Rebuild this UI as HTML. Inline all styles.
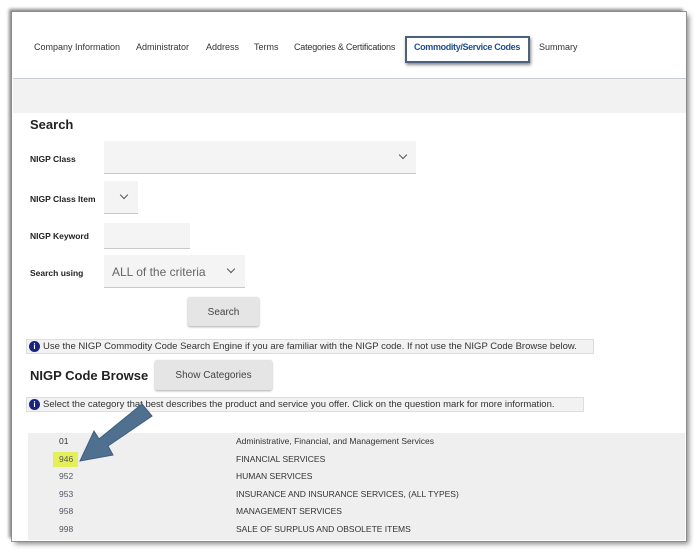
<!DOCTYPE html>
<html><head><style>
*{margin:0;padding:0;box-sizing:border-box}
body{width:700px;height:553px;background:#fff;position:relative;overflow:hidden;font-family:"Liberation Sans",sans-serif;color:#333}
.frame{position:absolute;left:12px;top:12px;width:674px;height:529px;background:#fff;box-shadow:-3px -3px 3px #8a8a8a,3px 3px 5px #8a8a8a, 0 0 0 1px #999}
.a{position:absolute;white-space:nowrap}
.nav{font-size:9px;color:#333;top:42px}
.lbl{font-size:8.5px;font-weight:bold;color:#222;left:30px}
.inp{position:absolute;background:#f4f4f4;border-bottom:1px solid #c8c8c8}
.chev{position:absolute;width:6px;height:6px;border-right:1.3px solid #555;border-bottom:1.3px solid #555;transform:rotate(45deg)}
.btn{position:absolute;background:#e5e5e5;border-radius:2px;box-shadow:0 1px 2px #aaa;font-size:10px;color:#444;text-align:center}
.info{position:absolute;left:26px;height:15px;background:#f2f2f2;border:1px solid #ddd;font-size:9.5px;color:#333;padding-left:16px;line-height:13px;white-space:nowrap}
.info i{position:absolute;left:2px;top:1px;width:11px;height:11px;border-radius:50%;background:#1a237e;color:#fff;font-size:8px;font-style:normal;font-weight:bold;text-align:center;line-height:11px}
.row{position:absolute;left:28px;width:657px;height:17.5px;font-size:8.5px;color:#333;line-height:17px}
.row .c{position:absolute;left:31px;color:#556}
.row .d{position:absolute;left:208px}
</style></head><body>
<div class="frame"></div>
<div class="a nav" style="left:34px">Company Information</div>
<div class="a nav" style="left:136px">Administrator</div>
<div class="a nav" style="left:206px">Address</div>
<div class="a nav" style="left:254px">Terms</div>
<div class="a nav" style="left:294px;letter-spacing:-0.2px">Categories &amp; Certifications</div>
<div class="a" style="left:405px;top:36px;width:125px;height:27px;border:2.5px solid #4a6180;box-shadow:1px 2px 3px #888"></div>
<div class="a nav" style="left:414px;font-weight:bold;color:#1f4f8f;letter-spacing:-0.35px">Commodity/Service Codes</div>
<div class="a nav" style="left:539px">Summary</div>
<div class="a" style="left:13px;top:78px;width:673px;height:1px;background:#c8ccd4"></div>
<div class="a" style="left:13px;top:79px;width:673px;height:34px;background:#f2f2f2"></div>
<div class="a" style="left:30px;top:117px;font-size:13px;font-weight:bold;color:#222">Search</div>
<div class="a lbl" style="top:154px">NIGP Class</div>
<div class="inp" style="left:104px;top:141px;width:312px;height:33px"><div class="chev" style="left:296px;top:11px"></div></div>
<div class="a lbl" style="top:194px">NIGP Class Item</div>
<div class="inp" style="left:104px;top:181px;width:34px;height:33px"><div class="chev" style="left:17px;top:11px"></div></div>
<div class="a lbl" style="top:231px">NIGP Keyword</div>
<div class="inp" style="left:104px;top:223px;width:86px;height:26px"></div>
<div class="a lbl" style="top:268px">Search using</div>
<div class="inp" style="left:104px;top:255px;width:141px;height:33px"><div style="position:absolute;left:8px;top:10px;font-size:12px;color:#666">ALL of the criteria</div><div class="chev" style="left:124px;top:11px"></div></div>
<div class="btn" style="left:188px;top:297px;width:71px;height:29px;line-height:31px">Search</div>
<div class="info" style="top:339px;width:568px"><i>i</i>Use the NIGP Commodity Code Search Engine if you are familiar with the NIGP code. If not use the NIGP Code Browse below.</div>
<div class="a" style="left:30px;top:368px;font-size:13px;font-weight:bold;color:#222">NIGP Code Browse</div>
<div class="btn" style="left:155px;top:360px;width:117px;height:30px;line-height:32px">Show Categories</div>
<div class="info" style="top:397px;width:558px"><i>i</i>Select the category that best describes the product and service you offer. Click on the question mark for more information.</div>
<div class="a" style="left:28px;top:433px;width:657px;height:107px;background:#efefef"></div>
<div class="row" style="top:433px"><span class="c" style="color:#333">01</span><span class="d">Administrative, Financial, and Management Services</span></div>
<div class="a" style="left:53px;top:452px;width:25px;height:15px;background:#e4ef5a"></div>
<div class="row" style="top:451px"><span class="c">946</span><span class="d">FINANCIAL SERVICES</span></div>
<div class="row" style="top:468px"><span class="c">952</span><span class="d">HUMAN SERVICES</span></div>
<div class="row" style="top:486px"><span class="c">953</span><span class="d">INSURANCE AND INSURANCE SERVICES, (ALL TYPES)</span></div>
<div class="row" style="top:503px"><span class="c">958</span><span class="d">MANAGEMENT SERVICES</span></div>
<div class="row" style="top:521px"><span class="c">998</span><span class="d">SALE OF SURPLUS AND OBSOLETE ITEMS</span></div>
<svg class="a" style="left:0;top:0" width="700" height="553"><polygon points="142,404 152,416 108,446 113,455 80,461 94,431 99,439" fill="#50708f" stroke="#3f5e80" stroke-width="1"/></svg>
</body></html>
